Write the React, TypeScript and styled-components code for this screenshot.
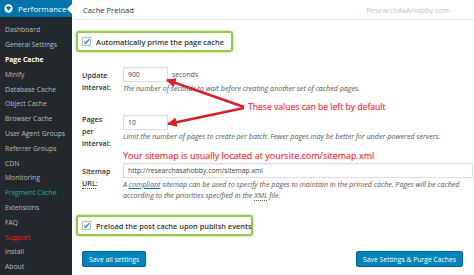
import styled, { createGlobalStyle } from "styled-components";

const Global = createGlobalStyle`
  html, body { margin: 0; padding: 0; }
  body {
    width: 474px;
    height: 275px;
    overflow: hidden;
    background: #fff;
    font-family: "Open Sans", "Liberation Sans", sans-serif;
    color: #444;
  }
`;

const Page = styled.div`
  position: relative;
  display: flex;
  width: 474px;
  height: 275px;
`;

const Sidebar = styled.nav`
  width: 72px;
  flex-shrink: 0;
  background: #23282d;
  display: flex;
  flex-direction: column;
`;

const SideHead = styled.div`
  position: relative;
  height: 19px;
  background: #0073aa;
  display: flex;
  align-items: center;
  gap: 5px;
  padding-left: 4px;
  color: #fff;
  font-size: 8px;
  &::after {
    content: "";
    position: absolute;
    right: 0;
    top: 4px;
    border: 5px solid transparent;
    border-right-color: #fff;
    border-left-width: 0;
  }
`;

const SideList = styled.ul`
  list-style: none;
  margin: 6px 0 0;
  padding: 0;
`;

const SideItem = styled.li<{ $tone?: "current" | "teal" | "red" }>`
  height: 14.8px;
  line-height: 14.8px;
  padding-left: 5px;
  font-size: 6.8px;
  white-space: nowrap;
  color: ${(p) =>
    p.$tone === "current"
      ? "#fff"
      : p.$tone === "teal"
      ? "#1ea8a8"
      : p.$tone === "red"
      ? "#e02424"
      : "#b8bcc0"};
  font-weight: ${(p) => (p.$tone === "current" ? 700 : 400)};
`;

const Main = styled.main`
  flex: 1;
  display: flex;
  flex-direction: column;
  padding-left: 1px;
`;

const Header = styled.div`
  height: 19px;
  display: flex;
  align-items: center;
  justify-content: space-between;
  padding: 0 24px 0 10px;
  border-bottom: 1px solid #ececec;
  font-size: 7.6px;
  color: #333;
`;

const Watermark = styled.span`
  color: #c4c4c4;
  font-size: 7.4px;
`;

const Highlight = styled.label<{ $top: number; $width: number }>`
  margin: ${(p) => p.$top}px 0 0 3px;
  width: ${(p) => p.$width}px;
  height: 21px;
  box-sizing: border-box;
  border: 2px solid #93c94d;
  border-radius: 3px;
  box-shadow: 0 0 3px rgba(110, 170, 40, 0.6);
  display: flex;
  align-items: center;
  gap: 5px;
  padding-left: 4px;
  font-size: 7.4px;
  font-weight: 600;
  color: #333;
  white-space: nowrap;
`;

const Check = styled.span`
  width: 7px;
  height: 7px;
  border: 1px solid #b4b9be;
  background: #fff;
  display: flex;
  align-items: center;
  justify-content: center;
  flex-shrink: 0;
`;

const Row = styled.div<{ $top: number }>`
  margin-top: ${(p) => p.$top}px;
  display: grid;
  grid-template-columns: 41px 1fr;
  padding-left: 9px;
`;

const Label = styled.div`
  font-size: 7.2px;
  font-weight: 600;
  color: #333;
  line-height: 12px;
  padding-top: 2px;
`;

const Abbr = styled.span`
  border-bottom: 1px dotted #555;
`;

const Field = styled.div<{ $offset?: number }>`
  display: flex;
  flex-direction: column;
  padding-top: ${(p) => p.$offset ?? 0}px;
`;

const InputLine = styled.div`
  display: flex;
  align-items: center;
  gap: 4px;
  font-size: 6.8px;
  color: #555;
`;

const Input = styled.div<{ $width: number }>`
  width: ${(p) => p.$width}px;
  height: 15px;
  box-sizing: border-box;
  border: 1px solid #ddd;
  box-shadow: inset 0 1px 2px rgba(0, 0, 0, 0.06);
  font-size: 6.8px;
  color: #444;
  display: flex;
  align-items: center;
  padding-left: 4px;
`;

const Desc = styled.p`
  margin: 1px 0 0;
  font-size: 7.1px;
  font-style: italic;
  color: #555;
  line-height: 11px;
  white-space: nowrap;
`;

const Link = styled.span`
  color: #0073aa;
  text-decoration: underline;
`;

const Note = styled.div`
  margin: 1px 0 0 50px;
  height: 12px;
  line-height: 12px;
  font-size: 9px;
  color: #e2262f;
  text-shadow: 0 0 2px #f4b4b8;
  white-space: nowrap;
`;

const Buttons = styled.div`
  margin-top: 15px;
  display: flex;
  justify-content: space-between;
  padding: 0 11px 0 9px;
`;

const Button = styled.button`
  height: 16px;
  padding: 0 6px;
  border: 1px solid #006799;
  border-radius: 2px;
  background: #0085ba;
  color: #fff;
  font-family: inherit;
  font-size: 6.8px;
`;

const Annotation = styled.div`
  position: absolute;
  left: 248px;
  top: 101px;
  font-size: 8.6px;
  color: #e2262f;
  text-shadow: 0 0 2px #f4b4b8;
  white-space: nowrap;
`;

const Overlay = styled.svg`
  position: absolute;
  left: 0;
  top: 0;
  pointer-events: none;
`;

const Tick = () => (
  <svg width="7" height="7" viewBox="0 0 10 10">
    <path d="M1.5 5.2 L4 7.8 L8.8 1.8" fill="none" stroke="#1e8cbe" strokeWidth="1.8" />
  </svg>
);

const menu: { name: string; tone?: "current" | "teal" | "red" }[] = [
  { name: "Dashboard" },
  { name: "General Settings" },
  { name: "Page Cache", tone: "current" },
  { name: "Minify" },
  { name: "Database Cache" },
  { name: "Object Cache" },
  { name: "Browser Cache" },
  { name: "User Agent Groups" },
  { name: "Referrer Groups" },
  { name: "CDN" },
  { name: "Monitoring" },
  { name: "Fragment Cache", tone: "teal" },
  { name: "Extensions" },
  { name: "FAQ" },
  { name: "Support", tone: "red" },
  { name: "Install" },
  { name: "About" },
];

export default function App() {
  return (
    <Page>
      <Global />
      <Sidebar>
        <SideHead>
          <svg width="9" height="9" viewBox="0 0 10 10">
            <circle cx="5" cy="5" r="4.6" fill="#fff" />
            <path d="M2.2 3.6 C4 2 6.5 2.3 7.8 4.2 L5 7.6 Z" fill="#0073aa" />
          </svg>
          Performance
        </SideHead>
        <SideList>
          {menu.map((m) => (
            <SideItem key={m.name} $tone={m.tone}>
              {m.name}
            </SideItem>
          ))}
        </SideList>
      </Sidebar>
      <Main>
        <Header>
          Cache Preload
          <Watermark>ResearchAsAHobby.com</Watermark>
        </Header>
        <Highlight $top={11} $width={157}>
          <Check>
            <Tick />
          </Check>
          Automatically prime the page cache
        </Highlight>
        <Row $top={15}>
          <Label>
            Update
            <br />
            interval:
          </Label>
          <Field>
            <InputLine>
              <Input $width={45}>900</Input>
              seconds
            </InputLine>
            <Desc>The number of seconds to wait before creating another set of cached pages.</Desc>
          </Field>
        </Row>
        <Row $top={17}>
          <Label>
            Pages
            <br />
            per
            <br />
            interval:
          </Label>
          <Field $offset={4}>
            <InputLine>
              <Input $width={45}>10</Input>
            </InputLine>
            <Desc>
              Limit the number of pages to create per batch. Fewer pages may be better for under-powered servers.
            </Desc>
          </Field>
        </Row>
        <Note>Your sitemap is usually located at yoursite.com/sitemap.xml</Note>
        <Row $top={1}>
          <Label>
            Sitemap
            <br />
            <Abbr>URL</Abbr>:
          </Label>
          <Field>
            <InputLine>
              <Input $width={350}>http://researchasahobby.com/sitemap.xml</Input>
            </InputLine>
            <Desc>
              A <Link>compliant</Link> sitemap can be used to specify the pages to maintain in the primed cache. Pages will be cached
              <br />
              according to the priorities specified in the <Abbr>XML</Abbr> file.
            </Desc>
          </Field>
        </Row>
        <Highlight $top={14} $width={177}>
          <Check>
            <Tick />
          </Check>
          Preload the post cache upon publish events
        </Highlight>
        <Buttons>
          <Button>Save all settings</Button>
          <Button>Save Settings &amp; Purge Caches</Button>
        </Buttons>
      </Main>
      <Annotation>These values can be left by default</Annotation>
      <Overlay width="474" height="275" viewBox="0 0 474 275">
        <defs>
          <marker id="head" viewBox="0 0 10 10" refX="9" refY="5" markerWidth="4" markerHeight="4" orient="auto">
            <path d="M0 0 L10 5 L0 10 Z" fill="#d8202a" />
          </marker>
        </defs>
        <line x1="244" y1="107" x2="167" y2="80" stroke="#d8202a" strokeWidth="2.4" markerEnd="url(#head)" />
        <line x1="244" y1="108" x2="168" y2="124" stroke="#d8202a" strokeWidth="2.4" markerEnd="url(#head)" />
      </Overlay>
    </Page>
  );
}
